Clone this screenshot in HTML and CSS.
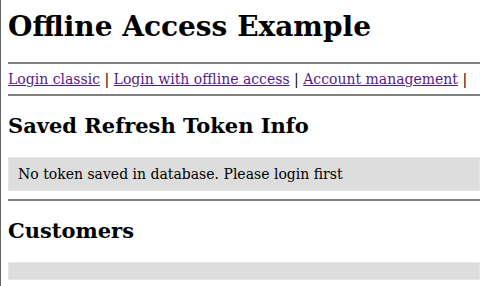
FILE: index.html
```html
<!DOCTYPE html>
<html lang="en">
<head>
    <meta charset="UTF-8">
    <title>Offline Access Example</title>
    <link rel="stylesheet" href="styles.css">
</head>
<body>
    <h1>Offline Access Example</h1>
    <hr>
    <div class="nav">
        <a href="#">Login classic</a> |
        <a href="#">Login with offline access</a> |
        <a href="#">Account management</a> |
    </div>
    <hr>
    <h2>Saved Refresh Token Info</h2>
    <div class="box">No token saved in database. Please login first</div>
    <hr>
    <h2>Customers</h2>
    <div class="box"></div>
</body>
</html>
```

FILE: styles.css
```css
html {
    border-left: 1px solid #666;
}
body {
    font-family: "DejaVu Serif", serif;
    font-size: 14px;
    margin: 8px 0 8px 7px;
}
h1 {
    font-size: 28px;
    margin: 2px 0 19px 0;
}
h2 {
    font-size: 21px;
    margin: 17px 0 19px 0;
}
a {
    color: #551a8b;
}
hr {
    height: 0;
    border: none;
    border-top: 2px solid #808080;
    margin: 7px 0;
}
.box {
    background-color: #ddd;
    border: 1px solid #e6e6e6;
    padding: 8px 9px;
    margin-bottom: 8px;
}
```
